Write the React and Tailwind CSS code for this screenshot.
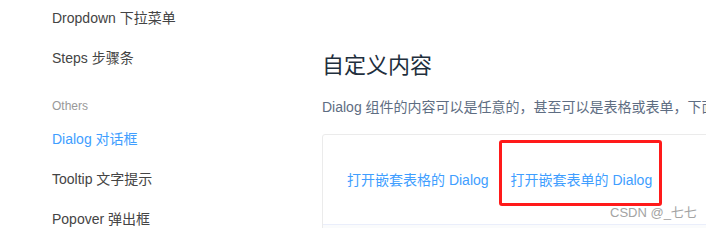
import React from "react";

const sideItems = [
  { label: "Dropdown 下拉菜单" },
  { label: "Steps 步骤条" },
];
const otherItems = [
  { label: "Dialog 对话框", active: true },
  { label: "Tooltip 文字提示" },
  { label: "Popover 弹出框" },
];

function SideLink({ label, active }) {
  return (
    <div
      className={
        "leading-[40px] h-[40px] text-[14px] whitespace-nowrap " +
        (active ? "text-[#409eff]" : "text-[#444]")
      }
    >
      {label}
    </div>
  );
}

export default function App() {
  return (
    <div
      className="relative w-[706px] h-[228px] overflow-hidden bg-white flex"
      style={{ fontFamily: '"Liberation Sans", "Noto Sans CJK SC", sans-serif' }}
    >
      {/* sidebar */}
      <aside className="w-[322px] shrink-0 pl-[52px] mt-[-2px] flex flex-col">
        {sideItems.map((it) => (
          <SideLink key={it.label} {...it} />
        ))}
        <div className="mt-[15px] leading-[26px] h-[26px] text-[12px] text-[#999]">Others</div>
        {otherItems.map((it) => (
          <SideLink key={it.label} {...it} />
        ))}
      </aside>

      {/* main */}
      <main className="shrink-0 w-[760px] pt-[51px]">
        <h3 className="text-[22px] leading-[30px] text-[#1f2f3d] font-normal">自定义内容</h3>
        <p className="mt-[16px] text-[14px] leading-[21px] text-[#5e6d82] whitespace-nowrap">
          Dialog 组件的内容可以是任意的，甚至可以是表格或表单，下面是应用了 Element Table 和 Form 组件的两个样例。
        </p>
        <div className="mt-[16px] border border-[#ebebeb] rounded-[3px]">
          <div className="px-[24px] py-[24px] flex items-center gap-[22px] h-[89px]">
            <button className="text-[14px] leading-[40px] h-[40px] text-[#409eff] whitespace-nowrap">
              打开嵌套表格的 Dialog
            </button>
            <div className="relative">
              <button className="text-[14px] leading-[40px] h-[40px] text-[#409eff] whitespace-nowrap">
                打开嵌套表单的 Dialog
              </button>
              <div className="absolute left-[-12px] right-[-10px] top-[-20px] bottom-[-6px] border-[3px] border-[#ff1a1a] rounded-[3px]" />
            </div>
          </div>
          <div className="h-[40px] border-t border-[#eaeefb] bg-[#fafbfc]" />
        </div>
      </main>

      <div className="absolute left-[610px] top-[204px] text-[13px] leading-[18px] text-[#a3a3a3] whitespace-nowrap">
        CSDN @_七七
      </div>
    </div>
  );
}
